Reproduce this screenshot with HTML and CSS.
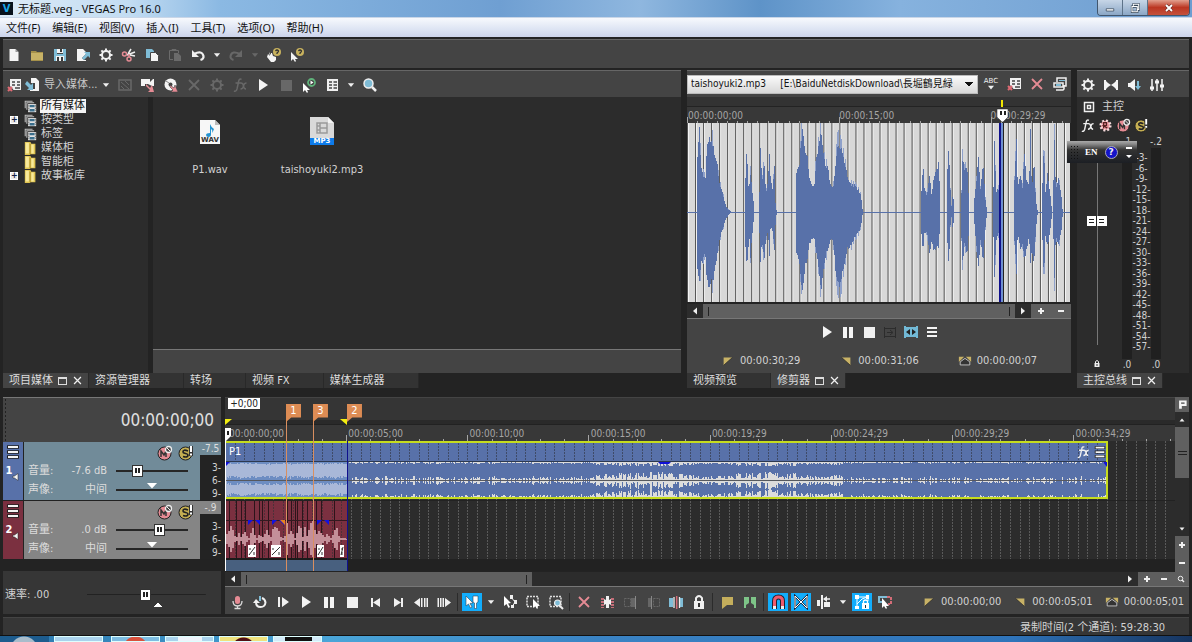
FILE: index.html
```html
<!DOCTYPE html>
<html lang="zh-CN">
<head>
    <meta charset="UTF-8">
    <meta name="viewport" content="width=device-width, initial-scale=1.0">
    <title>无标题.veg - VEGAS Pro 16.0</title>
    <link rel="stylesheet" href="styles.css">
</head>
<body>
<!-- icons -->
<svg class="sprite" aria-hidden="true">
    <symbol id="i-new" viewBox="0 0 16 16"><path fill="#f4f4f4" d="M3.500 2h6l3 3v9h-9z"/><path fill="#999" d="M9.500 2v3h3z"/></symbol>
    <symbol id="i-open" viewBox="0 0 16 16"><path fill="#a5904a" d="M2 4h5l1 1h6v9H2z"/><path fill="#c8b266" d="M2 6h12v7H2z"/></symbol>
    <symbol id="i-save" viewBox="0 0 16 16"><path fill="#7fbcd6" d="M2 2h3v5h6V2h3v12H2z"/><path fill="#f4f4f4" d="M5 2h6v4H5zM4 9h8v5H4z"/><path fill="#3a3a3a" d="M8 2h2v3H8zM5 10h2v4H5zM9 10h2v4H9z"/></symbol>
    <symbol id="i-render" viewBox="0 0 16 16"><path fill="#f4f4f4" d="M2 2h6l3 3v2l-4 4 2 2h2v1H2z"/><path fill="#7fbcd6" d="m7 11 4-4-2-2h6v6l-2-2-4 4z"/></symbol>
    <symbol id="i-gear" viewBox="0 0 16 16"><circle cx="8" cy="8" r="4" fill="none" stroke="currentColor" stroke-width="2"/><path stroke="currentColor" stroke-width="2" d="M8 1.500V4M8 12v2.500M1.500 8H4M12 8h2.500M3.400 3.400l1.800 1.800M10.800 10.800l1.800 1.800M3.400 12.600l1.800-1.800M10.800 5.200l1.800-1.800"/></symbol>
    <symbol id="i-cut" viewBox="0 0 16 16"><path fill="none" stroke="#eee" stroke-width="1.500" d="m6 8 8-3M7 7l3-5M9 8l5 1"/><g fill="none" stroke="#e58b94" stroke-width="1.500"><circle cx="3.500" cy="7" r="2"/><circle cx="8" cy="12" r="2"/></g><path stroke="#e58b94" stroke-width="1.500" d="M8 10V7"/></symbol>
    <symbol id="i-copy" viewBox="0 0 16 16"><path fill="#7fbcd6" d="M2 2h6l2 2v7H2z"/><path fill="#f4f4f4" stroke="#444" d="M6.500 5.500h5l3 3v6h-8z"/></symbol>
    <symbol id="i-paste" viewBox="0 0 16 16"><path fill="none" stroke="#6b6b6b" d="M6 12.500H2.500v-9h9V6M5 4V2.500h4V4"/><path fill="#6b6b6b" d="M7 6h4l3 3v5H7z"/></symbol>
    <symbol id="i-undo" viewBox="0 0 16 16"><path fill="none" stroke="currentColor" stroke-width="2.200" d="M4 7q8-4 9.500 2 .5 3-3 4"/><path fill="currentColor" d="M2 3v7h7z"/></symbol>
    <symbol id="i-redo" viewBox="0 0 16 16"><path fill="none" stroke="currentColor" stroke-width="2" d="M12 7Q4 3 2.500 9q-.5 3 3 4"/><path fill="currentColor" d="M14 3v7H7z"/></symbol>
    <symbol id="i-handhelp" viewBox="0 0 16 16"><circle cx="11" cy="5" r="4" fill="#c8b25e"/><path fill="none" stroke="#333" stroke-width="1.300" d="M9.500 4q1.500-2 3 0 0 1-1.500 2v1"/><path fill="#f4f4f4" d="m2 7 2 2-1-4 2 3V6h1l1 3 3 1v3l-2 2H5l-4-5z"/></symbol>
    <symbol id="i-arrowhelp" viewBox="0 0 16 16"><circle cx="11" cy="5" r="4" fill="#c8b25e"/><path fill="none" stroke="#333" stroke-width="1.300" d="M9.500 4q1.500-2 3 0 0 1-1.500 2v1"/><path fill="#f4f4f4" d="M2 5v9l2-2 2 3 1-1-1-2h3z"/></symbol>
    <symbol id="i-down" viewBox="0 0 16 16"><path fill="currentColor" d="M3 5h10l-5 6z"/></symbol>
    <symbol id="i-up" viewBox="0 0 16 16"><path fill="currentColor" d="M3 11h10L8 5z"/></symbol>
    <symbol id="i-left" viewBox="0 0 16 16"><path fill="currentColor" d="M12 1v14L4 8z"/></symbol>
    <symbol id="i-right" viewBox="0 0 16 16"><path fill="currentColor" d="M4 1v14l8-7z"/></symbol>
    <symbol id="i-plus" viewBox="0 0 16 16"><path fill="currentColor" d="M6 2h4v4h4v4h-4v4H6v-4H2V6h4z"/></symbol>
    <symbol id="i-minus" viewBox="0 0 16 16"><path fill="currentColor" d="M2 6h12v4H2z"/></symbol>
    <symbol id="i-list" viewBox="0 0 16 16"><path fill="#f0f0f0" d="M3 2h11v12H3z"/><path stroke="#444" stroke-width="1.500" d="M5 5h3M9.500 5H13M5 8h3M9.500 8H13M5 11h3M9.500 11H13"/></symbol>
    <symbol id="i-unused" viewBox="0 0 16 16"><path fill="#f0f0f0" d="M4 2h11v11H4z"/><path stroke="#444" stroke-width="1.500" d="M6 5h3M11 5h3M6 8h3M11 8h3M9 11h5"/><path stroke="#444" stroke-width="4" d="m2 10 4 4"/><path stroke="#e06b74" stroke-width="2" d="m2 10 4 4M6 10l-4 4"/></symbol>
    <symbol id="i-import" viewBox="0 0 16 16"><path fill="#f4f4f4" d="M6 1h5l3 3v10H5v-2h5V6H6z"/><path fill="#7fbcd6" d="m2 4 4 4 2-2v7H2l2-2-4-4z"/></symbol>
    <symbol id="i-capture" viewBox="0 0 16 16"><path fill="none" stroke="currentColor" stroke-width="1.500" d="M2 3h12v10H2z"/><path stroke="currentColor" d="m4 5 8 7M4 9l3 3M8 4l4 4"/></symbol>
    <symbol id="i-camera" viewBox="0 0 16 16"><path fill="#f4f4f4" d="M1 2h9v3l3-3h1v7h-2L8 7H5v2H1z"/><path fill="#e58b94" d="m6 7 4 4 2-3 2 7H8l2-2-4-4z"/></symbol>
    <symbol id="i-disc" viewBox="0 0 16 16"><circle cx="7.500" cy="7.500" r="6" fill="#f4f4f4"/><circle cx="7.500" cy="7.500" r="2" fill="#444"/><path stroke="#888" d="m3 4 3 2"/><path fill="#e58b94" stroke="#444" stroke-width=".6" d="m7 8 4 3 1-3 3 7H8l2-2-3-3z"/></symbol>
    <symbol id="i-x" viewBox="0 0 16 16"><path stroke="currentColor" stroke-width="1.800" d="m3 3 10 10M13 3 3 13"/></symbol>
    <symbol id="i-fx" viewBox="0 0 16 16"><path fill="none" stroke="currentColor" stroke-width="1.500" d="M9.500 2.500Q7 1 6.500 5L5 12q-1 3-3 2M3.500 6h6M9 6q2 0 2.500 3t2.500 3M14.500 6Q12 6 11.500 9T8.500 12"/></symbol>
    <symbol id="i-play" viewBox="0 0 16 16"><path fill="#f4f4f4" d="M4 2v12l9-6z"/></symbol>
    <symbol id="i-stop" viewBox="0 0 16 16"><path fill="currentColor" d="M3 3h11v11H3z"/></symbol>
    <symbol id="i-pause" viewBox="0 0 16 16"><path fill="#f4f4f4" d="M3 3h4v11H3zM9 3h4v11H9z"/></symbol>
    <symbol id="i-autoplay" viewBox="0 0 16 16"><circle cx="10.500" cy="5.500" r="3.500" fill="none" stroke="#5fb27a" stroke-width="1.800"/><path fill="#fff" d="M9.500 3.500v4l3-2zM2 6v9l2-2 2 3 1-1-1-2h3z"/></symbol>
    <symbol id="i-search" viewBox="0 0 16 16"><circle cx="6.500" cy="6.500" r="4.500" fill="#7fbcd6" stroke="#f0f0f0" stroke-width="1.500"/><path stroke="#f0f0f0" stroke-width="2.500" d="m10 10 4 4"/></symbol>
    <symbol id="i-glass" viewBox="0 0 16 16"><circle cx="7" cy="7" r="4.500" fill="none" stroke="currentColor" stroke-width="2"/><path stroke="currentColor" stroke-width="3" d="m10 10 4 4"/></symbol>
    <symbol id="i-bin" viewBox="0 0 16 16"><path fill="none" stroke="#bdbdbd" stroke-width="1.300" d="M1.500 10V1.500h9M3.500 12V3.500h9"/><path fill="#e3e3e3" d="M5 5h10v10H5z"/><path fill="#3a6e8c" d="M7 6h6v3H7zM7 11h6v3H7z"/><path stroke="#333" stroke-dasharray="1 1" d="M6 6v8M14 6v8"/></symbol>
    <symbol id="i-folder" viewBox="0 0 16 16"><path fill="#e0c450" d="M1 0h7l1 2h5v13H8l-1 1H1z"/><path fill="#f7e99b" d="M2 1h4v13H2zM9 3h3v11H9z"/><path fill="#9c8224" d="M7 2h1v13H7z"/></symbol>
    <symbol id="i-wav" viewBox="0 0 20 24"><path fill="#f7f7f7" d="M0 0h15l5 5v19H0z"/><path fill="#bbb" d="M15 0v5h5z"/><path fill="#2593d0" d="M10 4q1 3 4 5-1 3-2 4 1-3-1-4v6q0 2-2.500 2T6 15q0-2 4-2z"/></symbol>
    <symbol id="i-mp3" viewBox="0 0 24 28"><path fill="#d9d9d9" d="M0 0h18l6 6v15H0z"/><path fill="#f4f4f4" d="M18 0v6h6z"/><path fill="#0d7bea" d="M0 21h24v7H0z"/><path fill="none" stroke="#9a9a9a" stroke-width="1.500" d="M7 6h10v10H7zM10 6v10M10 11h7M7 9h3M7 13h3"/></symbol>
    <symbol id="i-abc" viewBox="0 0 16 16"><path fill="#f0f0f0" d="M4 9h8l-4 5z"/></symbol>
    <symbol id="i-stack" viewBox="0 0 16 16"><path fill="none" stroke="#f0f0f0" stroke-width="1.500" d="M5 6V2h9v8h-2M2 7h9v4H2zM4 14h7l1-1V9"/><path fill="#7fbcd6" d="M7 4h6v1H7zM4 8h5v2H4z"/></symbol>
    <symbol id="i-insert" viewBox="0 0 16 16"><path fill="none" stroke="#2c2c2c" d="M2.500 3v11M13.500 3v11M2 4.500h12M2 12.500h12M5 8.500h5M8 6l3 2.500L8 11"/></symbol>
    <symbol id="i-fit" viewBox="0 0 16 16"><path fill="#72b9d6" d="M1 2h2v1h10V2h2v12h-2v-1H3v1H1z"/><path fill="#222" d="m7 5-4 3 4 3zM9 5l4 3-4 3z"/></symbol>
    <symbol id="i-menu" viewBox="0 0 16 16"><path stroke="#222" stroke-width="3.400" d="M2 3h12M2 8h12M2 13h12"/><path stroke="#f4f4f4" stroke-width="2" d="M3 3h10M3 8h10M3 13h10"/></symbol>
    <symbol id="i-lines" viewBox="0 0 16 16"><path stroke="#f4f4f4" stroke-width="2" d="M3 4h10M3 8h10M3 12h10"/></symbol>
    <symbol id="i-down-mix" viewBox="0 0 16 16"><path fill="#f4f4f4" d="M2 6h2l5-4v12l-5-4H2z"/><path fill="#7fbcd6" d="M11 4h2v5h2l-3 4-3-4h2z"/></symbol>
    <symbol id="i-bow" viewBox="0 0 16 16"><path fill="#f4f4f4" d="M2 3v10l3-3 3-2-3-2zM14 3v10l-3-3-3-2 3-2z"/><path stroke="#f4f4f4" stroke-width="2" d="M2 3v10M14 3v10"/></symbol>
    <symbol id="i-mixer" viewBox="0 0 16 16"><path stroke="#f4f4f4" stroke-width="1.500" d="M3 2v12M8 2v12M13 2v12"/><path stroke="#f4f4f4" stroke-width="3" d="M1 11h4M6 5h4M11 9h4"/></symbol>
    <symbol id="i-master" viewBox="0 0 16 16"><path fill="none" stroke="#f0f0f0" stroke-width="2" d="M2 2h12v12H2z"/><path fill="#f0f0f0" d="M5 5h6v6H5z"/><path fill="#222" d="M7 7h2v2H7z"/></symbol>
    <symbol id="i-mute" viewBox="0 0 16 16"><circle cx="7.500" cy="8.500" r="6.500" fill="#e58b94" stroke="#222"/><path fill="none" stroke="#333" stroke-width="1.500" d="M4 12V6l3 4 2-4v6"/><circle cx="11.500" cy="4.500" r="3" fill="#444" stroke="#eee" stroke-width="1.300"/><path stroke="#eee" d="m9.500 2.500 4 4"/></symbol>
    <symbol id="i-solo" viewBox="0 0 16 16"><circle cx="7.500" cy="8.500" r="6.500" fill="#c4ae52" stroke="#222"/><path fill="none" stroke="#222" stroke-width="1.700" d="M10 6Q5 4 5 7q0 1 2.500 1.500T10 10q0 3-5 1.500"/><path stroke="#333" stroke-width="4" d="M13 1v10"/><path stroke="#fff" stroke-width="2" d="M13 1v6M13 8.500v2"/></symbol>
    <symbol id="i-arm" viewBox="0 0 16 16"><circle cx="8" cy="8" r="5" fill="#e58b94" stroke="#f4d9da" stroke-width="3" stroke-dasharray="2 1.900"/><path fill="none" stroke="#522" stroke-width="1.300" d="M6 11V5h3v3H6l4 3"/></symbol>
    <symbol id="i-lock" viewBox="0 0 16 16"><path fill="#f0f0f0" d="M3 7h10v8H3z"/><path fill="none" stroke="#f0f0f0" stroke-width="2" d="M5 7V4q3-4 6 0v3"/><path fill="#333" d="M7 9h2v4H7z"/></symbol>
    <symbol id="i-mark-in" viewBox="0 0 16 16"><path fill="#c8b266" d="M3 4h10l-10 9z"/><path stroke="#2c2c2c" d="M3 13 13 4"/></symbol>
    <symbol id="i-mark-out" viewBox="0 0 16 16"><path fill="#c8b266" d="M3 4h10v9z"/><path stroke="#2c2c2c" d="m3 4 10 9"/></symbol>
    <symbol id="i-range" viewBox="0 0 16 16"><path fill="#c8b266" d="M1 3h6L1 9zM9 3h6v6z"/><path fill="#333" stroke="#ccc" d="M2.500 12.500V9L8 5l5.500 4v3.500z"/></symbol>
    <symbol id="i-flag" viewBox="0 0 16 16"><path fill="#f4f4f4" d="M3 2h11v8H7v4H3z"/><path fill="#555" d="M6 5h5v2H6z"/></symbol>
    <symbol id="i-mic" viewBox="0 0 16 16"><rect x="6" y="2" width="5" height="8" rx="2.500" fill="#e58b94"/><path fill="none" stroke="#ddd" stroke-width="1.300" d="M4 7q0 5 4.500 5T13 7M8.500 12v3M5.500 14.500h6"/></symbol>
    <symbol id="i-loop" viewBox="0 0 16 16"><path fill="none" stroke="#f0f0f0" stroke-width="2" d="M4 8q0 5 4.500 5t5-4.500Q13 5 10 4"/><path fill="#f0f0f0" d="M1 9h7L4 5z"/><path stroke="#7fbcd6" stroke-width="2" d="M8 2v5"/></symbol>
    <symbol id="i-playstart" viewBox="0 0 16 16"><path fill="#f0f0f0" d="M3 3h2v10H3zM7 3v10l7-5z"/></symbol>
    <symbol id="i-start" viewBox="0 0 16 16"><path fill="#f0f0f0" d="M4 4h2v9H4zM13 4v9L6 8.500z"/></symbol>
    <symbol id="i-end" viewBox="0 0 16 16"><path fill="#f0f0f0" d="M11 4h2v9h-2zM4 4v9l7-4.500z"/></symbol>
    <symbol id="i-prev" viewBox="0 0 16 16"><path fill="#f0f0f0" d="M7 4v9L1 8.500zM8 4h1.500v9H8zM11 4h1.500v9H11zM13.500 4H15v9h-1.500z"/></symbol>
    <symbol id="i-next" viewBox="0 0 16 16"><path fill="#f0f0f0" d="M9 4v9l6-4.500zM6.500 4H8v9H6.500zM4 4h1.500v9H4zM1.500 4H3v9H1.500z"/></symbol>
    <symbol id="i-edit" viewBox="0 0 16 16"><path fill="#fff" stroke="#345" stroke-width=".6" d="M2 2v10l2.500-2 2 4 1.500-1-2-3.500 3-.5zM9 2h5v6l-1.500 1v5.500h-2V9L9 8z"/></symbol>
    <symbol id="i-envelope" viewBox="0 0 16 16"><path fill="#fff" d="M2 2v10l2.500-2 2 4 1.500-1-2-3.500 3-.5z"/><path fill="none" stroke="#f0f0f0" d="m9 3 4 5-3 5"/><path fill="#f0f0f0" d="M8 1h3v4H8zM12 6h3v4h-3zM9 11h3v3H9z"/></symbol>
    <symbol id="i-select" viewBox="0 0 16 16"><path fill="none" stroke="#ddd" stroke-width="1.500" stroke-dasharray="2 1" d="M2 2.500h11v10H2z"/><path fill="#fff" d="M8 5v9l2-2 2 3 1-1-1-2h3z"/></symbol>
    <symbol id="i-zoomtool" viewBox="0 0 16 16"><path fill="none" stroke="#ddd" stroke-width="1.500" stroke-dasharray="2 1" d="M2 2.500h11v10H2z"/><circle cx="9.500" cy="9" r="3" fill="#7fbcd6" stroke="#eee" stroke-width="1.200"/><path stroke="#eee" stroke-width="2" d="m12 12 3 3"/></symbol>
    <symbol id="i-trim" viewBox="0 0 16 16"><path stroke="#c46d78" stroke-width="3" stroke-dasharray="2 1" d="M3.500 4v10M13.500 4v10"/><path fill="#f0f0f0" d="M7 2h3v4l2-1v6l-2-1v4H7v-4l-2 1V5l2 1z"/></symbol>
    <symbol id="i-trimstart" viewBox="0 0 16 16"><path fill="#666" d="M9 4h4v9H9z"/><path stroke="#888" d="M13.500 2v13"/><path fill="none" stroke="#666" stroke-dasharray="2 1" d="M2.500 4.500h6v8h-6z"/></symbol>
    <symbol id="i-trimend" viewBox="0 0 16 16"><path fill="#666" d="M3 4h4v9H3z"/><path stroke="#888" d="M6.500 2v13"/><path fill="none" stroke="#666" stroke-dasharray="2 1" d="M8.500 4.500h6v8h-6z"/></symbol>
    <symbol id="i-split" viewBox="0 0 16 16"><path fill="#7fbcd6" d="M1 4h4v9H1zM12 4h3v9h-3z"/><path stroke="#eee" stroke-width="1.300" d="M6 3v11M11.500 3v11"/><path stroke="#d46c77" stroke-width="1.500" d="M8.700 2v13"/></symbol>
    <symbol id="i-marker" viewBox="0 0 16 16"><path fill="#c4ae5c" d="M3 3h11v8H8l-5 4z"/></symbol>
    <symbol id="i-region" viewBox="0 0 16 16"><path fill="#7ec488" d="M2 3h5v6l-3 2v3H2zM9 3h5v11h-2v-3L9 9z"/></symbol>
    <symbol id="i-snap" viewBox="0 0 16 16"><path fill="none" stroke="#223" stroke-width="5" d="M4.500 15V7q0-4 4-4t4 4v8"/><path fill="none" stroke="#ef5a6c" stroke-width="3" d="M4.500 14V7q0-4 4-4t4 4v7"/><path stroke="#eee" stroke-width="3" d="M4.500 12v3M12.500 12v3"/></symbol>
    <symbol id="i-xfade" viewBox="0 0 16 16"><path fill="none" stroke="#223" stroke-width="2" d="M2 2v12L14 2v12z"/><path fill="none" stroke="#fff" d="M2 2v12L14 2v12z"/></symbol>
    <symbol id="i-ripple" viewBox="0 0 16 16"><path fill="#f0f0f0" d="M5 1h2v14H5zM1 6h3v6H1zM8 8h6v5H8z"/><path stroke="#f0f0f0" stroke-width="1.500" d="M8 5h6"/><path fill="#f0f0f0" d="M11 2v6L7 5z"/></symbol>
    <symbol id="i-lockenv" viewBox="0 0 16 16"><path fill="none" stroke="#fff" d="M3 14V3h11v4M3 10l5-5 5-2"/><path fill="#fff" d="M1 12h4v3H1zM1 1h4v4H1zM12 1h3v4h-3zM8 9h7v6H8z"/><path fill="none" stroke="#fff" stroke-width="1.300" d="M9.500 9V7q2-2 4 0v2"/><path fill="#234" d="M11 11h1v3h-1z"/></symbol>
    <symbol id="i-ignore" viewBox="0 0 16 16"><path fill="none" stroke="#7fbcd6" stroke-width="2" d="M6 8H2V3h8"/><path fill="none" stroke="#d46c77" stroke-width="2" stroke-dasharray="3 1" d="M10 3h4v7h-3"/><path fill="#fff" d="M5 4v10l2-2 2 3 1-1-1-2h3z"/></symbol>
    <symbol id="i-speaker" viewBox="0 0 16 16"><path fill="#f4f4f4" stroke="#222" d="M2 6h3l7-5v14l-7-5H2z"/></symbol>
</svg>

<div class="app">
    <header class="titlebar">
        <span class="logo">V</span>
        <h1>无标题.veg - VEGAS Pro 16.0</h1>
        <div class="window-buttons">
            <button aria-label="最小化"><svg viewBox="0 0 16 16"><path fill="#fff" stroke="#345" d="M3 9h10v3H3z"/></svg></button>
            <button aria-label="还原"><svg viewBox="0 0 16 16"><path fill="none" stroke="#345" stroke-width="3" d="M6 5V3h7v7h-2M4 6h7v7H4z"/><path fill="none" stroke="#fff" stroke-width="1.500" d="M6 5V3h7v7h-2M4 6h7v7H4z"/></svg></button>
            <button class="close" aria-label="关闭"><svg viewBox="0 0 16 16"><path stroke="#522" stroke-width="4" d="m4 4 8 8M12 4l-8 8"/><path stroke="#fff" stroke-width="2.500" d="m4 4 8 8M12 4l-8 8"/></svg></button>
        </div>
    </header>

    <nav class="menubar">
        <a href="#">文件(F)</a><a href="#">编辑(E)</a><a href="#">视图(V)</a><a href="#">插入(I)</a><a href="#">工具(T)</a><a href="#">选项(O)</a><a href="#">帮助(H)</a>
    </nav>

    <main class="workspace">
        <div class="toolbar main-toolbar">
            <button aria-label="新建"><svg><use href="#i-new"/></svg></button>
            <button aria-label="打开"><svg><use href="#i-open"/></svg></button>
            <button aria-label="保存"><svg><use href="#i-save"/></svg></button>
            <button aria-label="渲染为"><svg><use href="#i-render"/></svg></button>
            <button aria-label="属性"><svg><use href="#i-gear"/></svg></button>
            <button aria-label="剪切"><svg><use href="#i-cut"/></svg></button>
            <button aria-label="复制"><svg><use href="#i-copy"/></svg></button>
            <button aria-label="粘贴"><svg><use href="#i-paste"/></svg></button>
            <button aria-label="撤消"><svg><use href="#i-undo"/></svg></button>
            <button class="drop" aria-label="撤消列表"><svg><use href="#i-down"/></svg></button>
            <button class="off" aria-label="重做"><svg><use href="#i-redo"/></svg></button>
            <button class="drop off" aria-label="重做列表"><svg><use href="#i-down"/></svg></button>
            <button aria-label="教程"><svg><use href="#i-handhelp"/></svg></button>
            <button aria-label="这是什么"><svg><use href="#i-arrowhelp"/></svg></button>
        </div>

        <div class="docks">
            <section class="dock media-dock">
                <div class="toolbar">
                    <button aria-label="移除未使用的媒体"><svg><use href="#i-unused"/></svg></button>
                    <button class="import"><svg><use href="#i-import"/></svg>导入媒体...</button>
                    <button class="drop" aria-label="导入选项"><svg><use href="#i-down"/></svg></button>
                    <button class="off" aria-label="捕获"><svg><use href="#i-capture"/></svg></button>
                    <button aria-label="捕获视频"><svg><use href="#i-camera"/></svg></button>
                    <button aria-label="提取音频"><svg><use href="#i-disc"/></svg></button>
                    <button class="off" aria-label="移除"><svg><use href="#i-x"/></svg></button>
                    <button class="off" aria-label="媒体属性"><svg><use href="#i-gear"/></svg></button>
                    <button class="off" aria-label="媒体 FX"><svg><use href="#i-fx"/></svg></button>
                    <button aria-label="预览"><svg><use href="#i-play"/></svg></button>
                    <button class="off" aria-label="停止预览"><svg><use href="#i-stop"/></svg></button>
                    <button aria-label="自动预览"><svg><use href="#i-autoplay"/></svg></button>
                    <button aria-label="视图"><svg><use href="#i-list"/></svg></button>
                    <button class="drop" aria-label="视图选项"><svg><use href="#i-down"/></svg></button>
                    <button aria-label="搜索"><svg><use href="#i-search"/></svg></button>
                </div>
                <div class="media-body">
                    <ul class="tree">
                        <li><i></i><svg><use href="#i-bin"/></svg><span class="selected">所有媒体</span></li>
                        <li><i class="expand">+</i><svg><use href="#i-bin"/></svg><span>按类型</span></li>
                        <li><i></i><svg><use href="#i-bin"/></svg><span>标签</span></li>
                        <li><i></i><svg><use href="#i-folder"/></svg><span>媒体柜</span></li>
                        <li><i></i><svg><use href="#i-folder"/></svg><span>智能柜</span></li>
                        <li><i class="expand">+</i><svg><use href="#i-folder"/></svg><span>故事板库</span></li>
                    </ul>
                    <div class="media-view">
                        <div class="files">
                            <figure>
                                <div class="thumb wav"><svg><use href="#i-wav"/></svg><b>WAV</b></div>
                                <figcaption>P1.wav</figcaption>
                            </figure>
                            <figure>
                                <div class="thumb mp3"><svg><use href="#i-mp3"/></svg><b>MP3</b></div>
                                <figcaption>taishoyuki2.mp3</figcaption>
                            </figure>
                        </div>
                        <div class="media-info"></div>
                    </div>
                </div>
                <div class="tabs">
                    <div class="tab active"><a href="#">项目媒体</a><button class="box" aria-label="浮动"></button><button class="shut" aria-label="关闭"><svg><use href="#i-x"/></svg></button></div>
                    <div class="tab"><a href="#">资源管理器</a></div>
                    <div class="tab"><a href="#">转场</a></div>
                    <div class="tab"><a href="#">视频 FX</a></div>
                    <div class="tab"><a href="#">媒体生成器</a></div>
                </div>
            </section>

            <section class="dock trimmer">
                <div class="toolbar">
                    <select aria-label="修剪器媒体">
                        <option>taishoyuki2.mp3 &nbsp;&nbsp;&nbsp; [E:\BaiduNetdiskDownload\長堀鶴見緑</option>
                    </select>
                    <button class="abc" aria-label="排序">ABC<svg><use href="#i-abc"/></svg></button>
                    <button aria-label="清除未使用"><svg><use href="#i-unused"/></svg></button>
                    <button class="remove" aria-label="移除当前媒体"><svg><use href="#i-x"/></svg></button>
                    <button aria-label="打开媒体位置"><svg><use href="#i-stack"/></svg></button>
                </div>
                <div class="trim-marks"></div>
                <div class="ruler trim-ruler">
                    <svg class="ticks" id="trimTicks" viewBox="0 0 382 16" preserveAspectRatio="none"></svg>
                    <span>00:00:00;00</span><span>00:00:15;00</span><span>00:00:29;29</span>
                </div>
                <div class="trim-wave">
                    <svg id="trimWave" viewBox="0 0 1146 538" preserveAspectRatio="none"></svg>
                    <div class="trim-cursor"><svg viewBox="0 0 11 23"><path fill="#f2e600" d="M4 0h2v7H4z"/><path fill="#fff" stroke="#222" stroke-width=".5" d="M0 9h11v8l-5 5h-1l-5-5z"/><path fill="#222" d="M3 11h2v4H3zM7 11h2v4H7z"/></svg></div>
                </div>
                <div class="hscroll">
                    <button aria-label="向左"><svg><use href="#i-left"/></svg></button>
                    <div class="bar"></div>
                    <button aria-label="向右"><svg><use href="#i-right"/></svg></button>
                    <button class="zoom" aria-label="放大"><svg><use href="#i-plus"/></svg></button>
                    <button class="zoom" aria-label="缩小"><svg><use href="#i-minus"/></svg></button>
                </div>
                <div class="trim-foot">
                    <div class="trim-transport">
                        <button aria-label="播放"><svg><use href="#i-play"/></svg></button>
                        <button aria-label="暂停"><svg><use href="#i-pause"/></svg></button>
                        <button aria-label="停止"><svg><use href="#i-stop"/></svg></button>
                        <button aria-label="添加到时间线"><svg><use href="#i-insert"/></svg></button>
                        <button aria-label="适合填充"><svg><use href="#i-fit"/></svg></button>
                        <button aria-label="更多"><svg><use href="#i-lines"/></svg></button>
                    </div>
                    <div class="times">
                        <span><svg><use href="#i-mark-in"/></svg>00:00:30;29</span>
                        <span><svg><use href="#i-mark-out"/></svg>00:00:31;06</span>
                        <span><svg><use href="#i-range"/></svg>00:00:00;07</span>
                    </div>
                </div>
                <div class="tabs">
                    <div class="tab"><a href="#">视频预览</a></div>
                    <div class="tab active"><a href="#">修剪器</a><button class="box" aria-label="浮动"></button><button class="shut" aria-label="关闭"><svg><use href="#i-x"/></svg></button></div>
                </div>
            </section>

            <section class="dock master">
                <div class="toolbar">
                    <button aria-label="总线属性"><svg><use href="#i-gear"/></svg></button>
                    <button aria-label="缩混"><svg><use href="#i-bow"/></svg></button>
                    <button aria-label="调暗"><svg><use href="#i-down-mix"/></svg></button>
                    <button aria-label="混音台"><svg><use href="#i-mixer"/></svg></button>
                </div>
                <div class="master-body">
                    <div class="master-name"><svg><use href="#i-master"/></svg>主控</div>
                    <div class="master-fx">
                        <button aria-label="主控 FX"><svg><use href="#i-fx"/></svg></button>
                        <button aria-label="自动化"><svg><use href="#i-arm"/></svg></button>
                        <button aria-label="静音"><svg><use href="#i-mute"/></svg></button>
                        <button aria-label="独奏"><svg><use href="#i-solo"/></svg></button>
                    </div>
                    <div class="meters">
                        <div class="fader">
                            <input type="range" min="0" max="100" value="69" aria-label="主控音量">
                            <svg><use href="#i-lock"/></svg>
                        </div>
                        <div class="meter"><span>.1</span><div></div><span>.0</span></div>
                        <ol class="scale" id="scale"></ol>
                        <div class="meter"><span>-.2</span><div></div><span>.0</span></div>
                    </div>
                </div>
                <div class="tabs">
                    <div class="tab active"><a href="#">主控总线</a><button class="box" aria-label="浮动"></button><button class="shut" aria-label="关闭"><svg><use href="#i-x"/></svg></button></div>
                </div>
                <!-- floating input language bar -->
                <div class="langbar"><i></i><span>EN</span><button class="help" aria-label="帮助">?</button><svg viewBox="0 0 8 16"><path fill="#fff" d="M1 3h6v2H1zM1 11h6l-3 3z"/></svg></div>
            </section>
        </div>

        <section class="timeline">
            <div class="headers">
                <div class="clock">00:00:00;00</div>
                <div class="track blue">
                    <div class="strip"><svg><use href="#i-menu"/></svg><p>1<svg><use href="#i-speaker"/></svg></p></div>
                    <div class="controls">
                        <div class="ms"><button aria-label="静音"><svg><use href="#i-mute"/></svg></button><button aria-label="独奏"><svg><use href="#i-solo"/></svg></button></div>
                        <div class="row"><label for="vol1">音量:</label><output>-7.6 dB</output><input type="range" id="vol1" class="vol" value="26"></div>
                        <div class="row"><label for="pan1">声像:</label><output>中间</output><input type="range" id="pan1" class="pan" value="50"></div>
                    </div>
                    <div class="level"><b>-7.5</b><span>3-</span><span>6-</span><span>9-</span></div>
                </div>
                <div class="track red">
                    <div class="strip"><svg><use href="#i-menu"/></svg><p>2<svg><use href="#i-speaker"/></svg></p></div>
                    <div class="controls">
                        <div class="ms"><button aria-label="静音"><svg><use href="#i-mute"/></svg></button><button aria-label="独奏"><svg><use href="#i-solo"/></svg></button></div>
                        <div class="row"><label for="vol2">音量:</label><output>.0 dB</output><input type="range" id="vol2" class="vol" value="62"></div>
                        <div class="row"><label for="pan2">声像:</label><output>中间</output><input type="range" id="pan2" class="pan" value="50"></div>
                    </div>
                    <div class="level"><b>-.9</b><span>3-</span><span>6-</span><span>9-</span></div>
                </div>
                <div class="rate">
                    <label for="rate">速率: .00</label>
                    <input type="range" id="rate" class="vol" value="49">
                </div>
            </div>

            <div class="editor">
                <div class="canvas">
                    <div class="marker-lane"><span class="offset">+0;00</span></div>
                    <div class="ruler main-ruler">
                        <svg class="ticks" id="mainTicks" viewBox="0 0 950 16" preserveAspectRatio="none"></svg>
                        <span>00:00:00;00</span><span>00:00:05;00</span><span>00:00:10;00</span><span>00:00:15;00</span><span>00:00:19;29</span><span>00:00:24;29</span><span>00:00:29;29</span><span>00:00:34;29</span>
                    </div>
                    <div class="lanes">
                        <svg class="drawing" id="lanes" viewBox="0 0 950 130" preserveAspectRatio="none"></svg>
                        <div class="clip-head"><span>P1</span><button aria-label="事件 FX"><svg><use href="#i-fx"/></svg></button><button aria-label="事件菜单"><svg><use href="#i-menu"/></svg></button></div>
                    </div>
                    <div class="range-ends"><i></i><i></i></div>
                    <svg class="playhead" viewBox="0 0 6 13"><path fill="#fff" d="M0 0h6v8l-5 5H0z"/><path fill="#222" d="M2 3h2v4H2z"/></svg>
                    <div id="markers"></div>
                </div>
                <div class="vscroll">
                    <button class="flag" aria-label="标记"><svg><use href="#i-flag"/></svg></button>
                    <button aria-label="向上"><svg><use href="#i-up"/></svg></button>
                    <div class="bar"></div>
                    <button aria-label="向下"><svg><use href="#i-down"/></svg></button>
                    <button class="zoom" aria-label="增高轨道"><svg><use href="#i-plus"/></svg></button>
                    <button class="zoom" aria-label="降低轨道"><svg><use href="#i-minus"/></svg></button>
                </div>
                <div class="hscroll main-scroll">
                    <button aria-label="向左"><svg><use href="#i-left"/></svg></button>
                    <div class="rail"><div class="bar"></div></div>
                    <button aria-label="向右"><svg><use href="#i-right"/></svg></button>
                    <button class="zoom" aria-label="放大"><svg><use href="#i-plus"/></svg></button>
                    <button class="zoom" aria-label="缩小"><svg><use href="#i-minus"/></svg></button>
                    <button class="zoom" aria-label="缩放工具"><svg><use href="#i-glass"/></svg></button>
                </div>
                <div class="toolbar transport">
                    <button aria-label="录制"><svg><use href="#i-mic"/></svg></button>
                    <button aria-label="循环播放"><svg><use href="#i-loop"/></svg></button>
                    <button aria-label="从头播放"><svg><use href="#i-playstart"/></svg></button>
                    <button aria-label="播放"><svg><use href="#i-play"/></svg></button>
                    <button aria-label="暂停"><svg><use href="#i-pause"/></svg></button>
                    <button aria-label="停止"><svg><use href="#i-stop"/></svg></button>
                    <button aria-label="转到开头"><svg><use href="#i-start"/></svg></button>
                    <button aria-label="转到结尾"><svg><use href="#i-end"/></svg></button>
                    <button aria-label="上一帧"><svg><use href="#i-prev"/></svg></button>
                    <button aria-label="下一帧"><svg><use href="#i-next"/></svg></button>
                    <hr>
                    <button class="on" aria-label="普通编辑工具"><svg><use href="#i-edit"/></svg></button>
                    <button class="drop" aria-label="编辑工具列表"><svg><use href="#i-down"/></svg></button>
                    <button aria-label="包络编辑工具"><svg><use href="#i-envelope"/></svg></button>
                    <button aria-label="选择编辑工具"><svg><use href="#i-select"/></svg></button>
                    <button aria-label="缩放编辑工具"><svg><use href="#i-zoomtool"/></svg></button>
                    <hr>
                    <button class="remove" aria-label="删除"><svg><use href="#i-x"/></svg></button>
                    <button aria-label="修剪"><svg><use href="#i-trim"/></svg></button>
                    <button aria-label="修剪开始"><svg><use href="#i-trimstart"/></svg></button>
                    <button aria-label="修剪结尾"><svg><use href="#i-trimend"/></svg></button>
                    <button aria-label="拆分"><svg><use href="#i-split"/></svg></button>
                    <button aria-label="锁定"><svg><use href="#i-lock"/></svg></button>
                    <hr>
                    <button aria-label="插入标记"><svg><use href="#i-marker"/></svg></button>
                    <button aria-label="插入区域"><svg><use href="#i-region"/></svg></button>
                    <hr>
                    <button class="on" aria-label="启用吸附"><svg><use href="#i-snap"/></svg></button>
                    <button class="on" aria-label="自动交叉淡化"><svg><use href="#i-xfade"/></svg></button>
                    <button aria-label="自动跟进"><svg><use href="#i-ripple"/></svg></button>
                    <button class="drop" aria-label="跟进选项"><svg><use href="#i-down"/></svg></button>
                    <button class="on" aria-label="将包络锁定到事件"><svg><use href="#i-lockenv"/></svg></button>
                    <button aria-label="忽略事件分组"><svg><use href="#i-ignore"/></svg></button>
                    <div class="times">
                        <span><svg><use href="#i-mark-in"/></svg>00:00:00;00</span>
                        <span><svg><use href="#i-mark-out"/></svg>00:00:05;01</span>
                        <span><svg><use href="#i-range"/></svg>00:00:05;01</span>
                    </div>
                </div>
            </div>
        </section>

        <footer class="statusbar">录制时间(2 个通道): 59:28:30</footer>
    </main>

    <div class="taskbar"><i class="orb"></i><i class="t1"></i><i class="t2"></i><i class="t3"></i><i class="t4"></i><i class="t5"></i></div>
</div>
<script src="app.js"></script>
</body>
</html>
```
FILE: styles.css
```css
* {
    box-sizing: border-box;
}
body {
    margin: 0;
    background: #232323;
    color: #d2d2d2;
    font: 11px/14px "DejaVu Sans Condensed", "Noto Sans CJK SC", sans-serif;
}
button {
    display: flex;
    align-items: center;
    justify-content: center;
    padding: 0;
    border: 0;
    background: none;
    color: #f0f0f0;
    font: inherit;
}
a {
    color: inherit;
    text-decoration: none;
}
svg {
    display: block;
    flex: none;
    width: 16px;
    height: 16px;
}
.sprite {
    position: absolute;
    width: 0;
    height: 0;
}
.app {
    display: flex;
    flex-direction: column;
    height: 100vh;
    min-height: 600px;
    overflow: hidden;
}

/* title and menu */
.titlebar {
    display: flex;
    align-items: center;
    height: 18px;
    background: linear-gradient(90deg, #dcebf7 0, #c2dcf2 130px, #8bb9e3 220px, #6f9fd2 500px, #8fb7df 640px, #5e93c8 760px, #86b2de 900px, #6d9dd0);
    border-bottom: 1px solid #c9d6e8;
}
.titlebar h1 {
    flex: 1;
    margin: 0 0 0 5px;
    color: #111;
    font: 11px/17px "Noto Sans", "Noto Sans CJK SC", sans-serif;
}
.logo {
    width: 13px;
    height: 13px;
    background: #08121c;
    color: #19a7e8;
    font-weight: bold;
    line-height: 13px;
    text-align: center;
}
.window-buttons {
    display: flex;
    align-self: flex-start;
    height: 16px;
    margin-right: 2px;
    border: 1px solid #41566e;
    border-top: 0;
    border-radius: 0 0 4px 4px;
    overflow: hidden;
}
.window-buttons button {
    width: 25px;
    background: linear-gradient(#c7d6e7, #8ba7c6);
    border-right: 1px solid #5d7389;
}
.window-buttons svg {
    width: 12px;
    height: 12px;
}
.window-buttons .close {
    width: 41px;
    border: 0;
    background: linear-gradient(#e2a08f, #bb3622 50%, #c4513c);
}
.menubar {
    display: flex;
    gap: 12px;
    height: 19px;
    padding-left: 6px;
    background: linear-gradient(#f7f9fd, #dde4f3 60%, #ccd3ea);
    color: #111;
    font: 11px/19px "Noto Sans", "Noto Sans CJK SC", sans-serif;
}
.workspace {
    flex: 1;
    display: flex;
    flex-direction: column;
    min-height: 0;
    padding: 2px 3px 0;
}

/* toolbars */
.toolbar {
    display: flex;
    align-items: center;
    gap: 3px;
    height: 27px;
    padding: 1px 0 0 1px;
    background: #444;
    border-top: 1px solid #666;
}
.toolbar button {
    width: 20px;
    height: 18px;
}
.toolbar .drop {
    width: 12px;
}
.drop svg {
    width: 10px;
    height: 10px;
}
.toolbar .off {
    color: #686868;
}
.toolbar .remove {
    color: #e58b94;
}
.toolbar .on {
    background: #12adfc;
}
.toolbar hr {
    width: 2px;
    height: 18px;
    margin: 0;
    border: 0;
    border-left: 1px solid #2b2b2b;
}
.main-toolbar {
    height: 29px;
}
.toolbar .import {
    width: auto;
    gap: 3px;
    margin-left: -2px;
    color: #c8c8c8;
}

/* docks */
.docks {
    flex: 1;
    display: flex;
    gap: 6px;
    min-height: 0;
    margin-top: 2px;
}
.dock {
    display: flex;
    flex-direction: column;
    min-width: 0;
}
.media-dock {
    flex: 678;
}
.trimmer {
    flex: 384;
}
.master {
    position: relative;
    width: 112px;
}
.media-body {
    flex: 1;
    display: flex;
    gap: 5px;
    min-height: 0;
}
.tree {
    width: 145px;
    margin: 0;
    padding: 2px 7px;
    background: #2c2c2c;
    list-style: none;
}
.tree li {
    display: flex;
    align-items: center;
    height: 14px;
}
.tree i {
    width: 8px;
    height: 8px;
    margin-right: 6px;
}
.tree .expand {
    border: 1px solid #fff;
    background: #e8e8e8;
    color: #124;
    font: bold 8px/6px "DejaVu Sans";
    text-align: center;
}
.tree svg {
    width: 13px;
    height: 13px;
    margin-right: 3px;
}
.tree span {
    padding: 0 1px;
}
.tree .selected {
    background: #f4f4f4;
    color: #111;
}
.media-view {
    flex: 1;
    display: flex;
    flex-direction: column;
    background: #2c2c2c;
}
.files {
    flex: 1;
    display: flex;
    padding: 20px 0 0 1px;
}
.files figure {
    display: flex;
    flex-direction: column;
    align-items: center;
    width: 112px;
    margin: 0;
    text-align: center;
}
.thumb {
    position: relative;
    height: 46px;
}
.thumb svg {
    width: 20px;
    height: 24px;
    margin-top: 3px;
}
.mp3 svg {
    width: 24px;
    height: 28px;
    margin-top: 0;
}
/* format name printed over the file icon */
.thumb b {
    position: absolute;
    top: 19px;
    left: 0;
    right: 0;
    color: #333;
    font: bold 7px/8px "DejaVu Sans";
}
.mp3 b {
    top: 20px;
    color: #fff;
}
.media-info {
    height: 24px;
    background: #444;
    border-top: 1px solid #777;
}
.tabs {
    display: flex;
    height: 15px;
}
.tab {
    display: flex;
    align-items: center;
    padding: 0 33px 0 6px;
    background: #333;
    border-right: 1px solid #292929;
    line-height: 15px;
    color: #ddd;
}
.tab.active {
    gap: 5px;
    padding-right: 5px;
    background: #444;
}
.tab .box {
    width: 9px;
    height: 8px;
    border: 1px solid #ddd;
    border-top-width: 2px;
}
.shut svg {
    width: 11px;
    height: 11px;
    stroke-width: 2px;
}

/* trimmer */
.trimmer .toolbar {
    padding: 0 1px 0 0;
}
.trimmer select {
    flex: 1;
    min-width: 0;
    height: 19px;
    padding: 0 18px 0 3px;
    appearance: none;
    border: 1px solid #bbb;
    border-radius: 0;
    background: linear-gradient(to top right, transparent 50%, #111 50%) right 8px top 6px / 4px 4px no-repeat, linear-gradient(to top left, transparent 50%, #111 50%) right 4px top 6px / 4px 4px no-repeat, linear-gradient(#fafafa, #d8d8d8);
    color: #111;
    font: 10px/16px "DejaVu Sans Condensed", "Noto Sans CJK JP", sans-serif;
}
.toolbar .abc {
    flex-direction: column;
    font: 7px/7px "DejaVu Sans";
}
.abc svg {
    width: 12px;
    height: 12px;
    margin-top: -6px;
}
.trim-marks {
    height: 10px;
    background: #333;
    border-bottom: 1px solid #232323;
}
.ruler {
    position: relative;
    display: flex;
    height: 16px;
    overflow: hidden;
    background: #383838;
    color: #a5a5a5;
    font-size: 10px;
    line-height: 17px;
}
.ruler span {
    flex: none;
    padding-left: 1px;
}
.ticks {
    position: absolute;
    inset: 0;
    width: 100%;
    height: 100%;
}
.trim-ruler span {
    width: 39.4%;
}
.main-ruler span {
    width: 12.76%;
    padding-left: 2px;
}
.main-ruler span:nth-of-type(1) {
    text-indent: 2px;
}
.trim-wave {
    position: relative;
    flex: 1;
    min-height: 0;
    margin-right: 1px;
    margin-bottom: 2px;
}
.trim-wave > svg {
    position: absolute;
    width: 100%;
    height: 100%;
}
/* playhead, hangs over the ruler */
.trim-cursor {
    position: absolute;
    top: -23px;
    bottom: 0;
    left: 81%;
    width: 11px;
}
.trim-cursor svg {
    width: 11px;
    height: 23px;
}
.hscroll {
    display: flex;
    height: 14px;
    background: #2c2c2c;
}
.hscroll button {
    width: 16px;
}
.hscroll svg,
.vscroll svg {
    width: 8px;
    height: 8px;
}
.hscroll .zoom {
    width: 20px;
    background: #5e5e5e;
}
.bar {
    background: #606060;
}
.hscroll .bar {
    display: flex;
    justify-content: space-between;
    align-items: center;
    flex: 1;
    padding: 0 5px;
}
.hscroll .bar::before,
.hscroll .bar::after {
    content: "";
    width: 1px;
    height: 9px;
    background: #222;
}
.trim-foot {
    display: flex;
    flex-direction: column;
    justify-content: space-between;
    height: 55px;
    padding: 5px 0 5px;
    background: #444;
    border-top: 1px solid #777;
}
.trim-transport {
    display: flex;
    justify-content: center;
    gap: 3px;
}
.trim-transport button {
    width: 18px;
}
.times {
    display: flex;
    justify-content: center;
    gap: 39px;
}
.times span {
    display: flex;
    align-items: center;
    gap: 5px;
}
.times svg {
    width: 14px;
    height: 14px;
}

/* master bus */
.master-body {
    flex: 1;
    display: flex;
    flex-direction: column;
    min-height: 0;
    background: #2c2c2c;
}
.master-name {
    display: flex;
    align-items: center;
    gap: 7px;
    height: 20px;
    padding-left: 6px;
}
.master-name svg {
    width: 12px;
    height: 12px;
}
.master-fx {
    display: flex;
    gap: 3px;
    padding: 1px 3px 3px;
}
.master-fx svg {
    width: 15px;
    height: 15px;
}
.meters {
    flex: 1;
    display: flex;
    min-height: 0;
    padding: 0 26px 2px 9px;
}
.fader {
    display: flex;
    flex-direction: column;
    align-items: center;
    width: 22px;
    margin-right: auto;
    padding: 26px 0 3px;
}
.fader input {
    flex: 1;
    min-height: 0;
    width: 20px;
    margin: 0 0 14px;
    writing-mode: vertical-lr;
    direction: rtl;
    appearance: none;
    background: linear-gradient(#777, #777) center / 1px 100% no-repeat;
}
.fader input::-webkit-slider-thumb {
    appearance: none;
    width: 20px;
    height: 10px;
    background: linear-gradient(90deg, transparent 9px, #222 9px 10px, transparent 10px), linear-gradient(90deg, transparent 2px, #222 2px 7px, transparent 7px 12px, #222 12px 17px, transparent 17px) 0 3px / 100% 1px no-repeat, linear-gradient(90deg, transparent 2px, #222 2px 7px, transparent 7px 12px, #222 12px 17px, transparent 17px) 0 6px / 100% 1px no-repeat, #fff;
}
.fader svg {
    width: 8px;
    height: 9px;
}
.meter {
    display: flex;
    flex-direction: column;
    align-items: center;
    width: 14px;
    font-size: 10px;
    line-height: 12px;
}
.meter div {
    flex: 1;
    width: 10px;
    background: #202020;
}
.scale {
    display: flex;
    flex-direction: column;
    justify-content: space-between;
    width: 19px;
    margin: 0 -2px;
    padding: 17px 0 19px;
    list-style: none;
    font-size: 10px;
    line-height: 10px;
}
.scale li {
    text-align: center;
}
.langbar {
    position: absolute;
    top: 71px;
    left: -10px;
    display: flex;
    align-items: center;
    gap: 7px;
    width: 70px;
    height: 22px;
    padding-left: 3px;
    background: linear-gradient(#aaa 0, #8a8a8a 3px, #333 9px, #1c1f24);
    color: #fff;
    font: bold 9px/20px "Liberation Serif", serif;
}
.langbar i {
    width: 8px;
    height: 14px;
    background: radial-gradient(#111 1px, transparent 1px) 0 0 / 3px 3px;
}
.langbar .help {
    width: 13px;
    height: 13px;
    border: 1px solid #aab;
    border-radius: 50%;
    background: #1414c8;
    font: bold 9px/11px "DejaVu Sans";
}
.langbar svg {
    width: 8px;
}

/* timeline */
.timeline {
    display: flex;
    gap: 4px;
    margin-top: 9px;
}
.headers {
    display: flex;
    flex-direction: column;
    width: 218px;
}
.clock {
    height: 45px;
    padding: 0 7px;
    background: radial-gradient(#222 1px, transparent 1px) 0 4px / 5px 4px repeat-y, #444;
    border-top: 1px solid #777;
    color: #e0e0e0;
    font-size: 17px;
    line-height: 44px;
    text-align: right;
}
.track {
    display: flex;
    height: 59px;
    border-bottom: 1px solid #222;
}
.blue {
    --tone: #718b99;
    --strip: #5871a9;
}
.red {
    --tone: #858585;
    --strip: #7b3040;
}
.strip {
    display: flex;
    flex: none;
    flex-direction: column;
    align-items: center;
    gap: 4px;
    width: 21px;
    padding-top: 2px;
    background: var(--strip);
    border-right: 1px solid #222;
}
.strip p {
    display: flex;
    align-items: flex-end;
    margin: 0;
    color: #fff;
    font-weight: bold;
}
.strip p svg {
    width: 8px;
    height: 10px;
    margin-bottom: -4px;
}
.controls {
    flex: 1;
    min-width: 0;
    padding: 2px 12px 0 4px;
    background: var(--tone);
    color: #dcdcdc;
}
.ms {
    display: flex;
    justify-content: flex-end;
    gap: 5px;
    height: 17px;
    margin-right: -6px;
}
.row {
    display: flex;
    align-items: center;
    height: 19px;
}
.row label {
    width: 30px;
}
.row output {
    width: 49px;
    margin-right: 9px;
    text-align: right;
}
.row input {
    flex: 1;
    width: 0;
    min-width: 0;
}
.vol,
.pan {
    height: 14px;
    margin: 0;
    appearance: none;
    background: linear-gradient(#262626, #262626) center / 100% 2px no-repeat;
}
.vol::-webkit-slider-thumb {
    appearance: none;
    width: 11px;
    height: 12px;
    border: 1px solid #333;
    background: linear-gradient(90deg, transparent 2px, #222 2px 4px, transparent 4px 5px, #222 5px 7px, transparent 7px) center / 9px 5px no-repeat, #fff;
}
.pan::-webkit-slider-thumb {
    appearance: none;
    width: 11px;
    height: 6px;
    margin-top: -7px;
    background: #fff;
    clip-path: polygon(0 0, 100% 0, 50% 100%);
}
.level {
    display: flex;
    flex: none;
    flex-direction: column;
    width: 21px;
    font-size: 10px;
    line-height: 13px;
    text-align: right;
}
.level b {
    margin-bottom: 6px;
    background: var(--tone);
    color: #ddd;
    font-weight: normal;
    text-align: center;
}
.rate {
    display: flex;
    align-items: center;
    gap: 38px;
    height: 43px;
    margin-top: 11px;
    padding: 4px 15px 0 2px;
    background: #363636;
}
/* the small white triangle marks the default rate */
.rate input {
    flex: 1;
    min-width: 0;
    height: 24px;
    background: linear-gradient(to bottom right, transparent 50%, #fff 50%) 58% 100% / 4px 4px no-repeat, linear-gradient(to bottom left, transparent 50%, #fff 50%) 62% 100% / 4px 4px no-repeat, linear-gradient(#222, #222) center / 100% 1px no-repeat;
}
.editor {
    flex: 1;
    display: grid;
    grid-template-columns: 1fr 14px;
    min-width: 0;
}
.canvas {
    position: relative;
    min-width: 0;
}
.marker-lane {
    height: 28px;
    background: linear-gradient(#353535 22px, #2a2a2a 22px);
    border-top: 1px solid #444;
    border-bottom: 1px solid #222;
}
.offset {
    display: block;
    width: 32px;
    height: 11px;
    margin-left: 3px;
    background: #fff;
    color: #222;
    font-size: 10px;
    line-height: 11px;
    text-align: center;
}
.lanes {
    position: relative;
    height: 130px;
    margin-bottom: 1px;
}
.drawing {
    position: absolute;
    width: 100%;
    height: 100%;
}
.clip-head {
    position: relative;
    display: flex;
    gap: 1px;
    align-items: center;
    width: 93%;
    height: 20px;
    padding: 2px 1px 0 4px;
    color: #fff;
}
.clip-head span {
    flex: 1;
}
.clip-head svg {
    height: 14px;
}
/* yellow ends of the loop range, over the marker lane */
.range-ends {
    position: absolute;
    top: 22px;
    left: 0;
    display: flex;
    justify-content: space-between;
    width: 12.84%;
}
.range-ends i {
    width: 7px;
    height: 6px;
    background: #f2ee10;
    clip-path: polygon(0 0, 100% 0, 0 100%);
}
.range-ends i + i {
    clip-path: polygon(0 0, 100% 0, 100% 100%);
}
.playhead {
    position: absolute;
    top: 31px;
    left: 0;
    width: 6px;
    height: 13px;
}
.marker {
    position: absolute;
    top: 7px;
    bottom: 1px;
    border-left: 1px solid #d98f60;
}
.m2 {
    border-color: transparent;
}
.marker b {
    display: block;
    width: 15px;
    height: 18px;
    margin-left: -1px;
    background: #dd8c54;
    clip-path: polygon(0 0, 100% 0, 100% 75%, 35% 75%, 0 100%);
    color: #fff;
    font-weight: normal;
    line-height: 13px;
    text-align: center;
}
.vscroll {
    display: flex;
    flex-direction: column;
    background: #2c2c2c;
}
.vscroll button {
    height: 15px;
}
.vscroll .bar {
    height: 51px;
    margin-bottom: auto;
    background: linear-gradient(transparent 1px, #222 1px 2px, transparent 2px 4px, #222 4px 5px, transparent 5px) center / 9px 6px no-repeat, #606060;
}
.vscroll .flag,
.vscroll .zoom {
    background: #5e5e5e;
}
.vscroll .zoom {
    height: 18px;
}
.vscroll .flag svg {
    width: 11px;
    height: 11px;
}
.main-scroll {
    grid-column: 1 / 3;
}
.rail {
    flex: 1;
    display: flex;
}
.hscroll .rail .bar {
    flex: 0 0 33%;
}
.main-scroll .zoom {
    width: 17px;
}
.transport {
    grid-column: 1 / 3;
    height: 28px;
    padding: 2px 5px 0 2px;
    border-color: #777;
}
.transport .times {
    gap: 12px;
    margin-left: auto;
}
.statusbar {
    height: 18px;
    margin-top: 3px;
    padding-right: 24px;
    background: #363636;
    border-top: 1px solid #444;
    line-height: 19px;
    text-align: right;
}
.taskbar {
    display: flex;
    gap: 5px;
    height: 7px;
    border-top: 1px solid #111;
    background: linear-gradient(90deg, #2a77ad, #4aa5d8 330px, #3a83c4 50%, #2f74ba 85%, #16345f);
    overflow: hidden;
}
.taskbar i {
    width: 49px;
    border: 1px solid #dff;
    background: #a9d2ec;
}
.taskbar .orb {
    height: 20px;
    border: 0;
    background: radial-gradient(circle at 24px 14px, #a8bccb 13px, #1d5c8e 14px);
}
.taskbar .t2 {
    margin-left: 3px;
    background: radial-gradient(circle at 50% 12px, #d9503c 12px, #7dbde2 13px);
}
.taskbar .t3 {
    background: linear-gradient(90deg, #a9d2ec 12px, #eef4fb 12px 36px, #a9d2ec 36px);
}
.taskbar .t4 {
    background: radial-gradient(circle at 50% 12px, #531014 11px, #efe27c 12px);
}
.taskbar .t5 {
    background: linear-gradient(90deg, #d2eaf8 11px, #111 11px 38px, #d2eaf8 38px);
}
```
FILE: app.js
```js
// drawing helpers for the rulers, waveforms and lanes
let seed = 7;
function rnd() {
    seed = (seed * 16807) % 2147483647;
    return seed / 2147483647;
}
function path(d, stroke, extra) {
    return '<path d="' + d + '" fill="none" stroke="' + stroke + '" shape-rendering="crispEdges" ' + (extra || '') + '/>';
}
function rect(x, y, w, h, fill) {
    return '<rect x="' + x + '" y="' + y + '" width="' + w + '" height="' + h + '" fill="' + fill + '" shape-rendering="crispEdges"/>';
}

// master meter scale
let scale = '';
for (let db = 3; db <= 57; db += 3) {
    scale += '<li>-' + db + '-</li>';
}
document.getElementById('scale').innerHTML = scale;

// ruler ticks
function ticks(id, width, step, major) {
    let d = '';
    for (let i = 0; i * step < width; i++) {
        const x = Math.round(i * step) + 0.5;
        d += 'M' + x + ' 16V' + (i % major === 0 ? 10 : 14);
    }
    document.getElementById(id).innerHTML = path(d, '#a5a5a5');
}
ticks('trimTicks', 382, 10.07, 15);
ticks('mainTicks', 950, 24.23, 5);

// trimmer waveform: [x, height above, height below]
const blobs = [
    [[26, 0, 0], [29, 170, 180], [35, 265, 215], [40, 140, 170], [50, 110, 130], [54, 100, 140], [57, 225, 220], [66, 235, 230], [74, 225, 220], [80, 190, 190], [88, 155, 140], [94, 95, 90], [104, 65, 55], [112, 25, 28], [122, 8, 8], [132, 0, 0]],
    [[173, 110, 110], [177, 200, 178], [180, 120, 150], [184, 60, 60], [187, 135, 150], [192, 85, 90], [197, 35, 30], [200, 0, 0]],
    [[214, 65, 70], [218, 240, 200], [221, 80, 80], [228, 160, 150], [234, 60, 80], [240, 100, 60], [243, 195, 160], [247, 110, 50], [255, 60, 60], [258, 195, 145], [262, 30, 40], [266, 0, 0]],
    [[326, 130, 130], [335, 145, 160], [342, 260, 235], [348, 255, 240], [353, 180, 170], [358, 195, 150], [363, 120, 110], [370, 85, 85], [380, 90, 85], [386, 190, 140], [394, 210, 180], [400, 262, 258], [405, 200, 190], [412, 150, 140], [420, 140, 120], [428, 85, 85], [436, 75, 90], [442, 140, 170], [450, 230, 235], [460, 205, 230], [468, 170, 170], [478, 120, 120], [488, 90, 110], [500, 85, 80], [512, 70, 65], [520, 50, 45], [525, 0, 0]],
    [[700, 70, 75], [705, 160, 125], [708, 80, 70], [716, 50, 60], [725, 125, 140], [730, 60, 100], [738, 110, 120], [748, 140, 115], [752, 160, 110], [757, 0, 0]],
    [[779, 140, 100], [783, 200, 165], [787, 100, 60], [790, 0, 0], [793, 55, 50], [798, 35, 30], [800, 0, 0]],
    [[821, 60, 80], [825, 210, 185], [829, 130, 90], [838, 145, 140], [842, 60, 80], [845, 0, 0]],
    [[858, 45, 40], [864, 100, 110], [871, 200, 190], [875, 60, 80], [884, 170, 160], [890, 50, 60], [896, 0, 0]],
    [[915, 80, 80], [919, 265, 250], [922, 60, 90], [930, 75, 70], [936, 70, 65], [942, 0, 0]],
    [[978, 100, 90], [984, 235, 195], [988, 70, 60], [995, 120, 120], [1002, 80, 100], [1009, 210, 150], [1013, 100, 130], [1022, 90, 80], [1026, 265, 165], [1030, 60, 110], [1037, 175, 170], [1042, 40, 60], [1048, 0, 0]],
    [[1061, 90, 95], [1066, 225, 220], [1069, 50, 70], [1076, 120, 110], [1084, 60, 60], [1090, 0, 0]],
    [[1096, 100, 90], [1099, 240, 215], [1103, 70, 70], [1110, 110, 110], [1119, 60, 70], [1124, 0, 0]]
];
let trim = rect(0, 0, 1146, 538, '#d8d8d8');
let grid = '';
let light = '';
for (let i = 0; i * 24 < 1146; i++) {
    grid += 'M' + (i * 24 + 1.5) + ' 0V538';
    light += 'M' + (i * 24 + 4.5) + ' 0V538';
}
trim += path(light, '#f4f4f4', 'stroke-width="3"') + path(grid, '#555', 'stroke-width="3"');
trim += rect(0, 267, 1146, 3, '#5871a9');
blobs.forEach(function (b) {
    const last = b[b.length - 1][0];
    let k = 0;
    for (let x = b[0][0]; x < last; x += 3) {
        while (k < b.length - 2 && b[k + 1][0] <= x) k++;
        const t = Math.min(1, (x - b[k][0]) / (b[k + 1][0] - b[k][0]));
        const up = b[k][1] + (b[k + 1][1] - b[k][1]) * t;
        const down = b[k][2] + (b[k + 1][2] - b[k][2]) * t;
        if (rnd() > 0.8) trim += rect(x, 268 - up * 1.1, 3, (up + down) * 1.1, '#8fa1ca');
        const u = up * (0.88 + rnd() * 0.12);
        const w = down * (0.88 + rnd() * 0.12);
        trim += rect(x, 268 - u, 3, u + w, '#5871a9');
    }
});
trim += rect(935, 0, 5, 538, '#10108c') + rect(940, 0, 6, 538, '#6f90d0') + rect(946, 0, 3, 538, '#222');
document.getElementById('trimWave').innerHTML = trim;

// main lanes
let out = rect(0, 0, 950, 118, '#2c2c2c') + rect(0, 118, 950, 12, '#222');
function gridLines(from, to, y1, y2, color) {
    let d = '';
    for (let i = 1; i * 9.69 < to; i++) {
        const x = Math.round(i * 9.69) + 0.5;
        if (x > from) d += 'M' + x + ' ' + y1 + 'V' + y2;
    }
    return path(d, color, 'stroke-dasharray="2 1"');
}
out += gridLines(0, 950, 0, 118, '#5a5a5a');
out += rect(0, 59, 950, 1, '#222');
out += rect(1, 1, 882, 57, '#5871a9');
out += rect(1, 21, 122, 36, '#a9b8d8');
out += gridLines(0, 882, 2, 20, '#3f4b68');

function amp(x) {
    if (x < 123) return 2 + rnd() * 3;
    if (x < 365) return 0.6 + rnd() * rnd() * 4.5;
    if (x < 617) return 1 + rnd() * (3 + Math.abs(Math.sin((x - 360) / 38)) * 5);
    return 0.4 + rnd() * rnd() * 4;
}
let sel = '';
let rest = '';
for (let x = 2; x < 881; x++) {
    const a = amp(x).toFixed(1);
    const b = (a * 0.5).toFixed(1);
    const seg = 'M' + (x + 0.5) + ' ' + (39.5 - a) + 'v' + 2 * a + 'M' + (x + 0.5) + ' 21v' + b + 'M' + (x + 0.5) + ' 57v-' + a;
    if (x < 123) sel += seg; else rest += seg;
}
out += path(sel, '#6d8dc2') + path(rest, '#dcdcdc');
out += rect(1, 20, 882, 1, '#2d3950') + rect(1, 39, 882, 1, '#56585e');
out += rect(0, 0, 883, 2, '#c6dc1e') + rect(0, 56, 883, 2, '#c6dc1e') + rect(881, 0, 2, 58, '#c6dc1e') + rect(0, 0, 1, 58, '#c6dc1e');
out += '<path d="M1 21h4l-4 4zM878 21h4v5zM433 21h13l-2 2h-9z" fill="#1010d8"/>';

// red track pieces
out += rect(0, 60, 122, 58, '#7b3040');
out += gridLines(0, 122, 60, 118, '#4e3038');
const cuts = [4, 11, 16, 20, 29, 34, 37, 43, 62, 66, 70, 72, 77, 82, 88, 91, 96, 109];
cuts.forEach(function (x) {
    out += rect(x, 60, 1, 58, '#2c141a');
});
out += rect(0, 79, 122, 1, '#331a20');
const voice = [5, 8, 13, 9, 3, 2, 6, 2, 5, 7, 3, 1, 6, 11, 4, 1, 4, 3, 2, 5, 9, 4, 2, 10, 12, 11, 8, 2, 1, 3, 16, 5, 8, 5, 1, 6, 13, 11, 2, 12, 3, 9, 16, 18, 9, 5, 8, 6, 4, 2, 5, 3, 1, 4, 9, 11, 3, 1, 1, 1];
voice.forEach(function (v, i) {
    out += rect(i * 2 + 1, 98 - v, 2, v * 2, '#c48f99');
});
out += rect(0, 98, 122, 1, '#c48f99') + rect(0, 117, 122, 2, '#1b1b1b') + rect(0, 119, 122, 11, '#48607f');
[23, 47, 92].forEach(function (x) {
    out += '<path d="M' + x + ' 79h5l-5 5zM' + (x + 12) + ' 79h-5l5 5z" fill="#1212e0"/>';
});
out += '<path d="M60 79h-5l5 5z" fill="#e88220"/>';
[[23, 8], [46, 10], [92, 7], [115, 4]].forEach(function (p) {
    out += rect(p[0], 104, p[1], 12, '#fff');
    out += '<path d="M' + (p[0] + 1) + ' 114l' + (p[1] - 2) + '-8M' + (p[0] + 2) + ' 107v2M' + (p[0] + p[1] - 2) + ' 111v3" stroke="#333" fill="none"/>';
});
out += rect(0, 0, 1, 130, '#fff') + rect(122, 0, 1, 130, '#10108c');
document.getElementById('lanes').innerHTML = out;

// markers, position in percent of the visible range
const markers = [['1', 6.42], ['3', 9.26], ['2', 12.84]];
document.getElementById('markers').innerHTML = markers.map(function (m) {
    return '<div class="marker m' + m[0] + '" style="left:' + m[1] + '%"><b>' + m[0] + '</b></div>';
}).join('');
```
